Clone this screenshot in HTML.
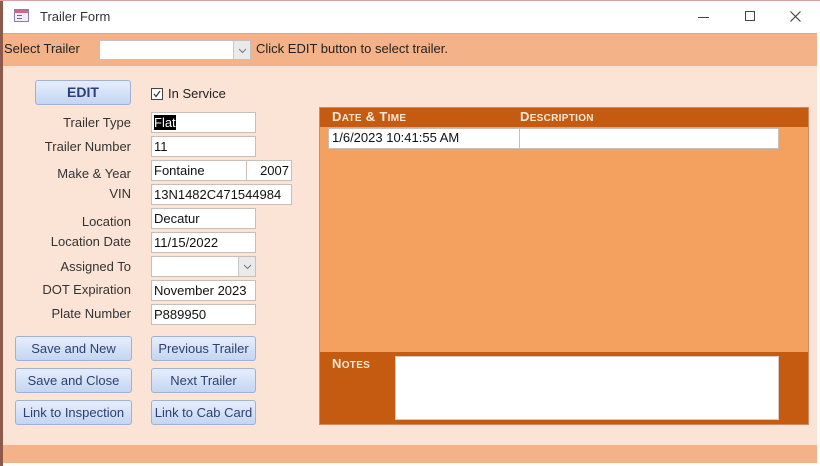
<!DOCTYPE html>
<html><head><meta charset="utf-8"><style>
*{box-sizing:border-box;margin:0;padding:0}
body{width:820px;height:466px;overflow:hidden;background:#fff;font-family:"Liberation Sans",sans-serif;font-size:12.5px;color:#222;position:relative}
.a{position:absolute}
.lbl{position:absolute;right:689px;text-align:right;white-space:nowrap;color:#333;font-size:13px}
.f{position:absolute;background:#fff;border:1px solid #c8c0b8;height:21px;padding:2px 2px;white-space:nowrap;overflow:hidden;color:#111;font-size:13px}
.btn{position:absolute;height:25px;border:1px solid #9fb2d6;border-radius:3px;background:linear-gradient(#e6eefc,#c4d5f3);color:#2f3f6e;text-align:center;line-height:23px;font-size:13px}
.dd{position:absolute;right:0;top:0;width:17px;height:19px;background:#eaeaea;border-left:1px solid #c8c8c8}
.sc{font-weight:bold;color:#fde9d9;font-size:13px;letter-spacing:.3px}
.sc small{font-size:10px}
</style></head><body>
<div class="a" style="left:0;top:0;width:3px;height:466px;background:#8c5a4a"></div>
<div class="a" style="left:0;top:0;width:820px;height:1px;background:#d9a0a0"></div>
<div class="a" style="left:14px;top:9px;width:15px;height:13px;border:1px solid #8a7fa8;background:#f2eef8"><div style="height:3px;background:#c86a8a"></div><div style="margin:2px 2px;height:1px;background:#6a6a9a;width:5px"></div><div style="margin:0 2px;height:1px;background:#6a6a9a;width:5px"></div></div>
<div class="a" style="left:40px;top:9px;font-size:13px;color:#333">Trailer Form</div>
<div class="a" style="left:698px;top:17px;width:11px;height:1px;background:#444"></div>
<div class="a" style="left:745px;top:11px;width:10px;height:10px;border:1px solid #444"></div>
<svg class="a" style="left:790px;top:11px" width="11" height="11"><path d="M0.5 0.5L10.5 10.5M10.5 0.5L0.5 10.5" stroke="#444" stroke-width="1.2"/></svg>
<div class="a" style="left:3px;top:33px;width:814px;height:33px;background:#f3b287;border-top:1px solid #e8a080"></div>
<div class="a" style="left:4px;top:41px;font-size:13px;color:#222">Select Trailer</div>
<div class="f" style="left:99px;top:40px;width:152px;height:20px"><div class="dd"><svg width="17" height="19"><path d="M5 8l3.5 3.5L12 8" fill="none" stroke="#777"/></svg></div></div>
<div class="a" style="left:256px;top:41px;font-size:13px;color:#222">Click EDIT button to select trailer.</div>
<div class="a" style="left:3px;top:66px;width:814px;height:379px;background:#fbe4d6"></div>
<div class="a" style="left:3px;top:445px;width:814px;height:18px;background:#f3b287"></div>
<div class="btn" style="left:35px;top:80px;width:96px;height:25px;font-weight:bold;font-size:14px;color:#2b3f7a">EDIT</div>
<div class="a" style="left:151px;top:88px;width:12px;height:12px;border:1px solid #444;background:#fff"><svg width="10" height="10" style="display:block"><path d="M2 5l2 2.5L8 2" fill="none" stroke="#333" stroke-width="1.2"/></svg></div>
<div class="a" style="left:168px;top:86px;font-size:13px">In Service</div>
<div class="lbl" style="top:115px">Trailer Type</div>
<div class="f" style="left:151px;top:112px;width:105px"><span style="background:#000;color:#fff">Flat</span></div>
<div class="lbl" style="top:139px">Trailer Number</div>
<div class="f" style="left:151px;top:136px;width:105px">11</div>
<div class="lbl" style="top:166px">Make &amp; Year</div>
<div class="f" style="left:151px;top:160px;width:96px">Fontaine</div>
<div class="f" style="left:246px;top:160px;width:46px;text-align:right">2007</div>
<div class="lbl" style="top:186px">VIN</div>
<div class="f" style="left:151px;top:184px;width:141px">13N1482C471544984</div>
<div class="lbl" style="top:214px">Location</div>
<div class="f" style="left:151px;top:208px;width:105px">Decatur</div>
<div class="lbl" style="top:234px">Location Date</div>
<div class="f" style="left:151px;top:232px;width:105px">11/15/2022</div>
<div class="lbl" style="top:259px">Assigned To</div>
<div class="f" style="left:151px;top:256px;width:105px"><div class="dd"><svg width="17" height="19"><path d="M5 8l3.5 3.5L12 8" fill="none" stroke="#777"/></svg></div></div>
<div class="lbl" style="top:282px">DOT Expiration</div>
<div class="f" style="left:151px;top:280px;width:105px">November 2023</div>
<div class="lbl" style="top:306px">Plate Number</div>
<div class="f" style="left:151px;top:304px;width:105px">P889950</div>
<div class="btn" style="left:15px;top:336px;width:117px">Save and New</div>
<div class="btn" style="left:151px;top:336px;width:105px">Previous Trailer</div>
<div class="btn" style="left:15px;top:368px;width:117px">Save and Close</div>
<div class="btn" style="left:151px;top:368px;width:105px">Next Trailer</div>
<div class="btn" style="left:15px;top:400px;width:117px">Link to Inspection</div>
<div class="btn" style="left:151px;top:400px;width:105px">Link to Cab Card</div>
<div class="a" style="left:319px;top:107px;width:490px;height:318px;background:#f4a05e;border:1px solid #d08a60"></div>
<div class="a" style="left:320px;top:108px;width:488px;height:19px;background:#c55a11"></div>
<div class="a sc" style="left:332px;top:109px">D<small>ATE</small> &amp; T<small>IME</small></div>
<div class="a sc" style="left:520px;top:109px">D<small>ESCRIPTION</small></div>
<div class="f" style="left:328px;top:128px;width:192px;height:21px;padding:1px 3px">1/6/2023 10:41:55 AM</div>
<div class="f" style="left:519px;top:128px;width:260px;height:21px"></div>
<div class="a" style="left:320px;top:352px;width:488px;height:72px;background:#c55a11"></div>
<div class="a sc" style="left:332px;top:356px">N<small>OTES</small></div>
<div class="a" style="left:395px;top:356px;width:384px;height:64px;background:#fff;border:1px solid #d8c8c0"></div>
</body></html>
